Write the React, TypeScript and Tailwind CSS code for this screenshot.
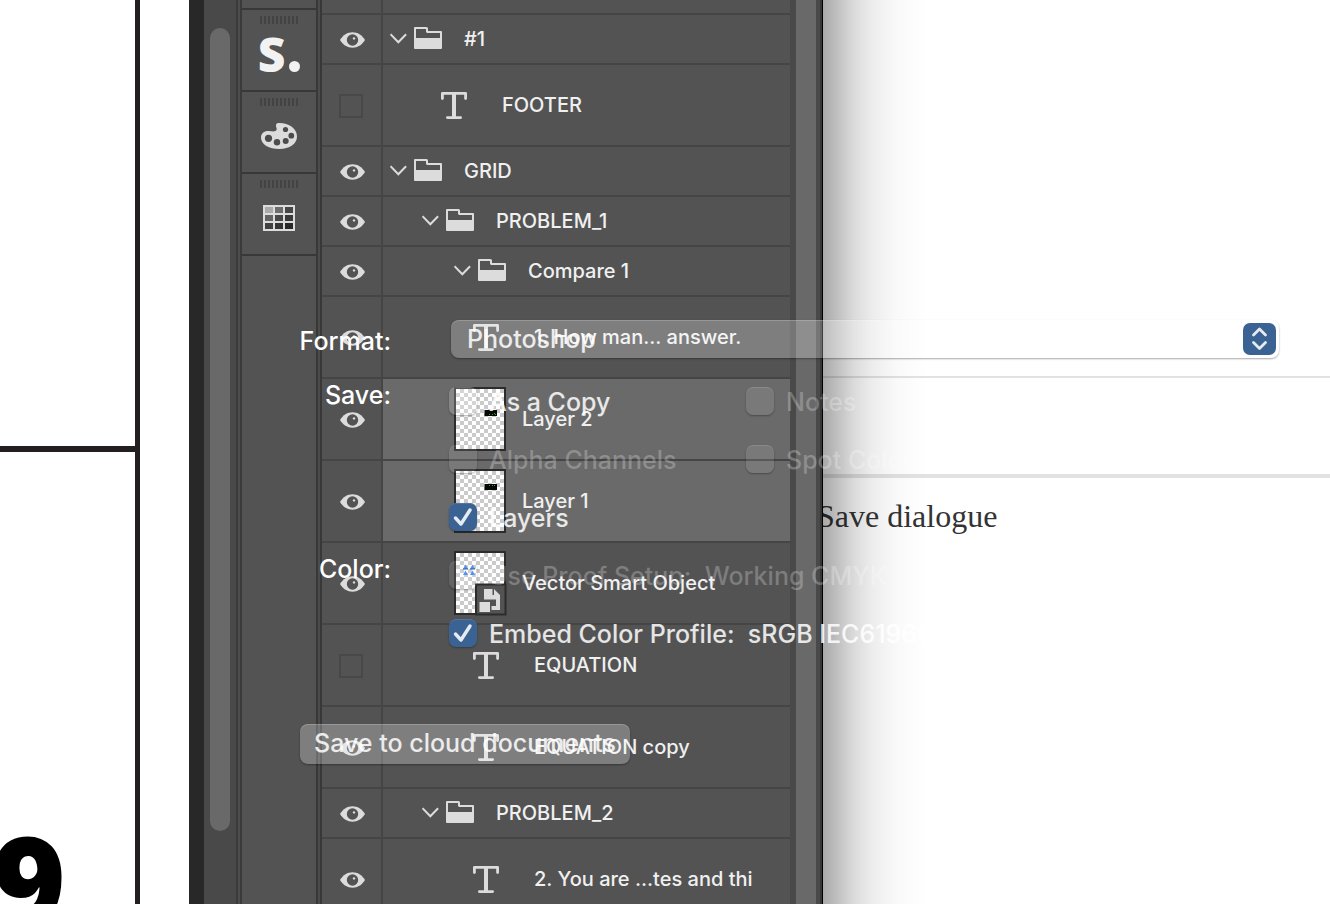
import React from "react";

type Layer = {
  kind: "folder" | "text" | "thumb";
  name: string;
  indent: string;
  visible: boolean;
  selected?: boolean;
  mark?: "green2" | "green1" | "smart";
};

const layers: Layer[] = [
  { kind: "folder", name: "#1", indent: "pl-[7px]", visible: true },
  { kind: "text", name: "FOOTER", indent: "pl-[58px]", visible: false },
  { kind: "folder", name: "GRID", indent: "pl-[7px]", visible: true },
  { kind: "folder", name: "PROBLEM_1", indent: "pl-[39px]", visible: true },
  { kind: "folder", name: "Compare 1", indent: "pl-[71px]", visible: true },
  { kind: "text", name: "1. How man... answer.", indent: "pl-[90px]", visible: true },
  { kind: "thumb", name: "Layer 2", indent: "pl-[71px]", visible: true, selected: true, mark: "green2" },
  { kind: "thumb", name: "Layer 1", indent: "pl-[71px]", visible: true, selected: true, mark: "green1" },
  { kind: "thumb", name: "Vector Smart Object", indent: "pl-[71px]", visible: true, mark: "smart" },
  { kind: "text", name: "EQUATION", indent: "pl-[90px]", visible: false },
  { kind: "text", name: "EQUATION copy", indent: "pl-[90px]", visible: true },
  { kind: "folder", name: "PROBLEM_2", indent: "pl-[39px]", visible: true },
  { kind: "text", name: "2. You are ...tes and thi", indent: "pl-[90px]", visible: true },
];

function Eye() {
  return (
    <svg className="ml-[2px]" width="25" height="16" viewBox="0 0 25 16" aria-hidden="true">
      <path d="M0 8C3 3 7.5 0.3 12.5 0.3S22 3 25 8C22 13 17.5 15.7 12.5 15.7S3 13 0 8Z" fill="#dcdcdc" />
      <circle cx="12.5" cy="8" r="5.7" fill="#535353" />
      <circle cx="14" cy="6.4" r="1.2" fill="#dcdcdc" />
    </svg>
  );
}

function Chevron() {
  return (
    <svg className="shrink-0" width="17" height="12" viewBox="0 0 17 12" aria-hidden="true">
      <path d="M0.5 1.2L8.3 9.2L16.1 1.2" fill="none" stroke="#dcdcdc" strokeWidth="2" />
    </svg>
  );
}

function Folder() {
  return (
    <svg className="mb-[2px] shrink-0" width="28" height="22" viewBox="0 0 28 22" aria-hidden="true">
      <path d="M1 0H12.5Q14 0 14 1.5V4H27Q28 4 28 5V21Q28 22 27 22H1Q0 22 0 21V1Q0 0 1 0ZM2 2V11H26V6H13L12 5V2Z" fill="#dcdcdc" fillRule="evenodd" />
    </svg>
  );
}

function TypeIcon() {
  return (
    <svg className="shrink-0" width="26" height="28" viewBox="0 0 26 28" aria-hidden="true">
      <path d="M1.4 7.5V2.4H24.6V7.5" fill="none" stroke="#dcdcdc" strokeWidth="2.8" strokeLinecap="round" strokeLinejoin="round" />
      <path d="M13 2V26" stroke="#dcdcdc" strokeWidth="4" />
      <path d="M6.3 26.6H19.7" stroke="#dcdcdc" strokeWidth="2.6" strokeLinecap="round" />
    </svg>
  );
}

function Thumb({ mark }: { mark?: Layer["mark"] }) {
  const y = mark === "green2" ? 24 : 16;
  return (
    <svg className="shrink-0 overflow-visible" width="52" height="64" viewBox="0 0 52 64" aria-hidden="true">
      <defs>
        <pattern id={"checker-" + mark} width="8" height="8" patternUnits="userSpaceOnUse" x="2" y="2">
          <rect width="8" height="8" fill="#fff" />
          <path d="M4 0H8V4H4ZM0 4H4V8H0Z" fill="#cacaca" />
        </pattern>
      </defs>
      <rect x="1" y="1" width="50" height="62" fill={"url(#checker-" + mark + ")"} stroke="#2c2c2c" strokeWidth="2" />
      {mark !== "smart" && <rect x="30.500" y={y - 1} width="12.500" height="6" fill="#060806" />}
      {mark === "green2" && <path d="M35 27.500h1M38 27.500h1M40 26.500h1M41 27.500h1" stroke="#4b9b35" />}
      {mark === "green1" && <path d="M35 16.500h1M38 16.500h1M40 16.500h1" stroke="#4b9b35" />}
      {mark === "smart" && (
        <g>
          <path d="M9 18L11.500 13.500L14 18ZM16 18L18.500 13.500L21 18ZM9 24L11.500 19.500L14 24ZM16 24L18.500 19.500L21 24Z" fill="#3f86f0" />
          <path d="M9 18h5M16 18h5" stroke="#1c4f9c" />
          <rect x="22" y="33.500" width="29.500" height="30" fill="#535353" stroke="#2c2c2c" strokeWidth="2" />
          <path d="M30 38H38.500V44H46V59H37.500V55H42V48.500H30ZM40 38L46 44H40Z" fill="#dcdcdc" />
          <rect x="25.500" y="51" width="10.500" height="10" fill="#dcdcdc" />
        </g>
      )}
    </svg>
  );
}

function LayerRow({ layer }: { layer: Layer }) {
  const folder = layer.kind === "folder";
  return (
    <li className={"flex shrink-0 border-b-2 border-[#454545] " + (folder ? "h-[50px]" : "h-[82px]")}>
      <button
        type="button"
        aria-label={(layer.visible ? "Hide " : "Show ") + layer.name}
        className="flex w-[61px] shrink-0 items-center justify-center border-r-2 border-[#454545] pt-[2px]"
      >
        {layer.visible ? <Eye /> : <span className="mr-[2px] size-6 border-2 border-[#484848]" />}
      </button>
      <div className={"flex min-w-0 flex-1 items-center " + layer.indent + (layer.selected ? " bg-[#6a6a6a]" : "")}>
        {folder && (
          <>
            <button type="button" aria-label={"Collapse " + layer.name} className="mr-[7px]"><Chevron /></button>
            <Folder />
            <span className="pl-[22px]">{layer.name}</span>
          </>
        )}
        {layer.kind === "text" && (
          <>
            <TypeIcon />
            <span className="pl-[35px] whitespace-nowrap">{layer.name}</span>
          </>
        )}
        {layer.kind === "thumb" && (
          <>
            <Thumb mark={layer.mark} />
            <span className="pl-4 whitespace-nowrap">{layer.name}</span>
          </>
        )}
      </div>
    </li>
  );
}

function Grip() {
  return (
    <svg className="mt-[6px]" width="38" height="8" aria-hidden="true">
      <path d="M0 4H38" stroke="#434343" strokeWidth="8" strokeDasharray="2 2" />
    </svg>
  );
}

function Palette() {
  return (
    <svg width="36" height="26" viewBox="0 0 36 26" aria-hidden="true">
      <path d="M15 1.500C15.500 0.300 17 0 18.500 0C28 0 36 5.500 36 13.500C36 21 28.500 26 18.500 26C8 26 0 21.500 0 14.500C0 10.500 3 8 7 8C10 8 12 9 14.500 8C16.500 7 15.500 5 15 3.500Z" fill="#dcdcdc" />
      <g fill="#4c4c4c">
        <circle cx="7.500" cy="15.300" r="3.600" />
        <circle cx="16" cy="19.300" r="3.200" />
        <circle cx="24.700" cy="18" r="3" />
        <circle cx="30.300" cy="12.700" r="2.900" />
        <circle cx="24.500" cy="6.500" r="2.600" />
      </g>
    </svg>
  );
}

function Swatches() {
  const fills = ["#aaaaaa", "#6d6d6d", "#474747", "#636363", "#474747", "#3a3a3a", "#404040", "#343434", "#282828"];
  return (
    <svg width="32" height="26" viewBox="0 0 32 26" aria-hidden="true">
      <rect width="32" height="26" fill="#dcdcdc" />
      {fills.map((f, i) => (
        <rect key={i} x={2 + (i % 3) * 10} y={2 + Math.floor(i / 3) * 8} width="8" height="6" fill={f} />
      ))}
    </svg>
  );
}

function Tool({ label, children }: { label: string; children: React.ReactNode }) {
  return (
    <div className="flex h-[82px] shrink-0 flex-col items-center border-b-2 border-[#383838]">
      <Grip />
      <button type="button" aria-label={label} className="flex h-[60px] w-full items-center justify-center">
        {children}
      </button>
    </div>
  );
}

function Check({ id, label, checked, disabled }: { id: string; label: string; checked?: boolean; disabled?: boolean }) {
  return (
    <div className="flex h-[58px] items-center whitespace-nowrap">
      <span className="relative flex size-7 shrink-0">
        <input
          id={id}
          type="checkbox"
          defaultChecked={checked}
          disabled={disabled}
          className={
            "size-7 appearance-none rounded-[7px] shadow-[0_1px_2px_rgba(0,0,0,0.3),inset_0_1px_0_rgba(255,255,255,0.12)] " +
            (checked ? "bg-[#3a6293]" : disabled ? "bg-white/10" : "bg-white/20")
          }
        />
        {checked && (
          <svg className="pointer-events-none absolute inset-0" width="28" height="28" viewBox="0 0 28 28" aria-hidden="true">
            <path d="M6.500 15L12 21L21 7" fill="none" stroke="#e6ebf2" strokeWidth="3.400" strokeLinecap="round" strokeLinejoin="round" />
          </svg>
        )}
      </span>
      <label htmlFor={id} className={"pt-[2px] pl-3 whitespace-pre " + (disabled ? "text-white/25" : "text-white/85")}>
        {label}
      </label>
    </div>
  );
}

function SaveDialog() {
  return (
    <form
      aria-label="Save options"
      onSubmit={(e) => e.preventDefault()}
      className="absolute inset-0 z-20 flex flex-col items-start pt-80 pr-[51px] pl-[292px] font-['Inter',sans-serif] text-[25px] leading-8 font-medium text-white"
    >
      <div className="flex w-full items-center">
        <label htmlFor="format" className="w-[99px] shrink-0 pt-1 text-right">Format:</label>
        <div className="relative ml-[60px] flex flex-1">
          <select
            id="format"
            className="h-[38px] w-full appearance-none rounded-lg bg-white/25 pl-4 text-white/85 shadow-[0_1px_2px_rgba(0,0,0,0.35),inset_0_1px_0_rgba(255,255,255,0.2)]"
          >
            <option>Photoshop</option>
          </select>
          <svg className="pointer-events-none absolute top-[3px] right-[3px]" width="33" height="32" viewBox="0 0 33 32" aria-hidden="true">
            <rect width="33" height="32" rx="7" fill="#3a6293" />
            <path d="M10.500 12L16.500 6L22.500 12M10.500 19.500L16.500 25.500L22.500 19.500" fill="none" stroke="#e6ebf2" strokeWidth="2.800" strokeLinecap="round" strokeLinejoin="round" />
          </svg>
        </div>
      </div>

      <fieldset aria-labelledby="save-group" className="flex pt-[14px]">
        <span id="save-group" className="w-[99px] pt-[7px] text-right">Save:</span>
        <div className="ml-[58px] grid grid-cols-[297px_auto]">
          <Check id="copy" label="As a Copy" />
          <Check id="notes" label="Notes" disabled />
          <Check id="alpha" label="Alpha Channels" disabled />
          <Check id="spot" label="Spot Colors" disabled />
          <Check id="layers" label="Layers" checked />
        </div>
      </fieldset>

      <fieldset aria-labelledby="color-group" className="flex">
        <span id="color-group" className="w-[99px] pt-[7px] text-right">Color:</span>
        <div className="ml-[58px]">
          <Check id="proof" label="Use Proof Setup:  Working CMYK" disabled />
          <Check id="embed" label="Embed Color Profile:  sRGB IEC61966-2.1" checked />
        </div>
      </fieldset>

      <button
        type="button"
        className="mt-[62px] ml-2 h-10 rounded-lg bg-white/25 px-[14px] pb-[2px] whitespace-nowrap text-white/85 shadow-[0_1px_2px_rgba(0,0,0,0.35),inset_0_1px_0_rgba(255,255,255,0.2)]"
      >
        Save to cloud documents
      </button>
    </form>
  );
}

export default function App() {
  return (
    <div className="relative flex h-screen overflow-hidden bg-white font-['Inter',sans-serif]">
      <section aria-label="Canvas" className="flex w-[189px] shrink-0">
        <div className="flex w-[140px] flex-col overflow-hidden border-r-[5px] border-[#231f20]">
          <div className="h-[452px] shrink-0 border-b-[6px] border-[#231f20]" />
          <p className="-ml-2 pt-[360px] font-['Open_Sans',sans-serif] text-[126px] leading-[134px] font-extrabold text-black">9</p>
        </div>
      </section>

      <div className="z-10 flex shrink-0 border-r border-black bg-[#535353]">
        <div className="w-[15px] bg-[#282828]" />
        <div className="w-8 bg-[#494949] px-[6px] pt-7">
          <div className="h-[803px] rounded-full bg-[#696969]" />
        </div>
        <div className="w-[6px] border-x-2 border-[#3b3b3b] bg-[#4c4c4c]" />
        <div className="flex w-[74px] flex-col overflow-hidden">
          <div className="h-[10px] shrink-0 border-b-2 border-[#383838]" />
          <Tool label="Suitcase">
            <span className="font-['Open_Sans',sans-serif] text-5xl font-extrabold text-[#f2f2f2]">S</span>
            <span className="mt-6 ml-1 size-[11px] rounded-full bg-[#f2f2f2]" />
          </Tool>
          <Tool label="Color"><Palette /></Tool>
          <Tool label="Swatches"><Swatches /></Tool>
        </div>
        <div className="w-[6px] border-x-2 border-[#383838] bg-[#4c4c4c]" />
        <ul className="flex w-[468px] flex-col overflow-hidden text-xl font-medium text-[#f0f0f0]">
          <li className="flex h-[15px] shrink-0 border-b-2 border-[#454545]">
            <span className="w-[61px] border-r-2 border-[#454545]" />
          </li>
          {layers.map((l) => (
            <LayerRow key={l.name} layer={l} />
          ))}
        </ul>
        <div className="w-[6px] bg-[#494949]" />
        <div className="w-5 bg-[#696969]" />
        <div className="w-1 bg-[#494949]" />
        <div className="w-[2px] bg-[#363636]" />
      </div>

      <main className="relative -ml-[6px] min-w-0 flex-1">
        <div className="mt-[376px] h-[102px] border-t-2 border-b-4 border-[#e2e2e2]" />
        <p className="pt-5 font-['Liberation_Serif',serif] text-[32px] leading-9 text-[#333]">Save dialogue</p>
        <div className="absolute inset-y-0 left-[6px] w-[104px] bg-[linear-gradient(to_right,rgba(0,0,0,0.34),rgba(0,0,0,0.24)_15%,rgba(0,0,0,0.14)_30%,rgba(0,0,0,0.07)_48%,rgba(0,0,0,0.025)_70%,transparent)]" />
      </main>

      <SaveDialog />
    </div>
  );
}
